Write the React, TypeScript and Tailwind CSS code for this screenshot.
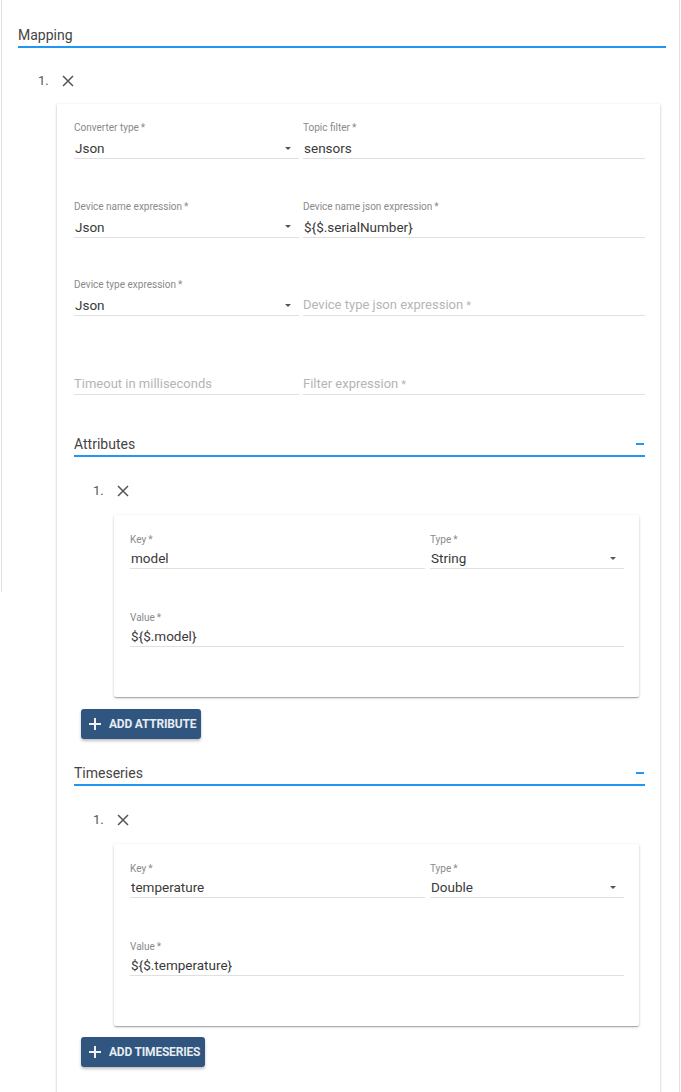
import React from 'react';

const cardShadow =
  'bg-white shadow-[0_1px_3px_rgba(0,0,0,0.2),0_1px_1px_rgba(0,0,0,0.14),0_2px_1px_-1px_rgba(0,0,0,0.12)]';

const CloseIcon = () => (
  <svg width="12" height="12" viewBox="0 0 12 12" className="block">
    <path d="M1 1 L11 11 M11 1 L1 11" stroke="#555" strokeWidth="1.5" fill="none" />
  </svg>
);

const PlusIcon = () => (
  <svg width="12" height="12" viewBox="0 0 12 12" className="block">
    <path d="M6 0 V12 M0 6 H12" stroke="#eef2f6" strokeWidth="2" fill="none" />
  </svg>
);

const Arrow = () => (
  <span className="ml-auto block h-0 w-0 border-x-[3.5px] border-t-[3.5px] border-x-transparent border-t-[#555]" />
);

type FieldProps = {
  label?: string;
  value?: string;
  placeholder?: string;
  select?: boolean;
  inner?: boolean;
  required?: boolean;
};

const Field = ({ label, value, placeholder, select, inner, required = true }: FieldProps) => (
  <div>
    <div className="h-[12px] text-[10px] leading-[12px] text-[#8a8a8a]">
      {label && (
        <>
          {label}
          <span className="ml-[2px]">*</span>
        </>
      )}
    </div>
    <div
      className={`flex h-[21px] items-center border-b border-[#e0e0e0] ${inner ? 'mt-[2px]' : 'mt-[4px]'} ${select ? 'pr-[8px]' : ''}`}
    >
      {value ? (
        <span className="pl-[1px] text-[13.5px] leading-[20px] text-[#3a3a3a]">{value}</span>
      ) : (
        <span className="text-[13px] leading-[20px] text-[#b5b5b5]">
          {placeholder}
          {required && <span className="ml-[3px] text-[11px]">*</span>}
        </span>
      )}
      {select && <Arrow />}
    </div>
  </div>
);

const SectionHeader = ({ title, dash }: { title: string; dash?: boolean }) => (
  <>
    <div className="flex h-[20px] items-center text-[14px] text-[#444]">
      <span>{title}</span>
      {dash && <span className="ml-auto mr-[1px] block h-[1.5px] w-[8px] bg-[#2196f3]" />}
    </div>
    <div className="mt-[1px] h-[2px] bg-[#2196f3]" />
  </>
);

const ItemHeader = ({ className }: { className: string }) => (
  <div className={`flex h-[24px] items-center ${className}`}>
    <span className="w-[24px] text-[13px] text-[#555]">1.</span>
    <CloseIcon />
  </div>
);

const KeyValueCard = ({ keyValue, typeValue, value }: { keyValue: string; typeValue: string; value: string }) => (
  <div className={`ml-[40px] mr-[6px] mt-[12px] rounded-[2px] pb-[50px] pl-[16px] pr-[15px] pt-[19px] ${cardShadow}`}>
    <div className="mb-[43px] grid grid-cols-[295px_1fr] gap-x-[5px]">
      <Field inner label="Key" value={keyValue} />
      <Field inner label="Type" value={typeValue} select />
    </div>
    <Field inner label="Value" value={value} />
  </div>
);

const AddButton = ({ text }: { text: string }) => (
  <button className="ml-[7px] flex h-[30px] items-center gap-[8px] rounded-[3px] bg-[#30557f] pl-[8px] pr-[5px] text-[12px] font-bold uppercase tracking-[-0.2px] text-[#e6ecf2] shadow-[0_2px_3px_rgba(0,0,0,0.25)]">
    <PlusIcon />
    <span>{text}</span>
  </button>
);

export default function App() {
  return (
    <div className="flex min-h-[1092px] w-[681px] bg-white font-['Roboto',sans-serif]">
      <div className="w-[3px] shrink-0 pl-px">
        <div className="h-[592px] w-px bg-[#e2e2e2]" />
      </div>
      <div className="mr-px flex-1 border-r border-[#e2e2e2] pl-[15px] pr-[13px] pt-[25px]">
        <SectionHeader title="Mapping" />
        <ItemHeader className="mt-[21px] pl-[20px]" />

        <div className={`ml-[39px] mr-[6px] mt-[11px] min-h-[1000px] pb-[40px] pl-[17px] pr-[15px] pt-[18px] ${cardShadow}`}>
          <div className="grid grid-cols-[225px_1fr] gap-x-[4px] gap-y-[41.7px]">
            <Field label="Converter type" value="Json" select />
            <Field label="Topic filter" value="sensors" />
            <Field label="Device name expression" value="Json" select />
            <Field label="Device name json expression" value="${$.serialNumber}" />
            <Field label="Device type expression" value="Json" select />
            <Field placeholder="Device type json expression" />
            <Field placeholder="Timeout in milliseconds" required={false} />
            <Field placeholder="Filter expression" />
          </div>

          <div className="mt-[39px]">
            <SectionHeader title="Attributes" dash />
          </div>
          <ItemHeader className="mt-[22px] pl-[19px]" />
          <KeyValueCard keyValue="model" typeValue="String" value="${$.model}" />
          <div className="mt-[12px]">
            <AddButton text="Add attribute" />
          </div>

          <div className="mt-[24px]">
            <SectionHeader title="Timeseries" dash />
          </div>
          <ItemHeader className="mt-[22px] pl-[19px]" />
          <KeyValueCard keyValue="temperature" typeValue="Double" value="${$.temperature}" />
          <div className="mt-[11px]">
            <AddButton text="Add timeseries" />
          </div>
        </div>
      </div>
    </div>
  );
}
